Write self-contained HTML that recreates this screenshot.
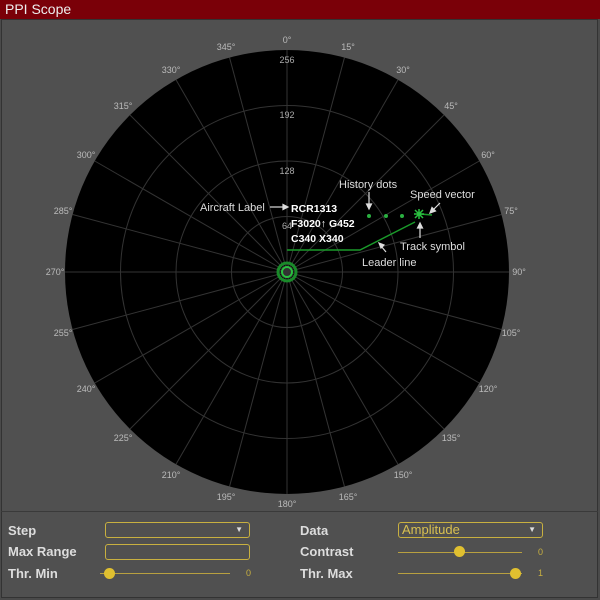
<!DOCTYPE html><html><head><style>
body{margin:0;width:600px;height:600px;background:#4a4a4a;font-family:"Liberation Sans",sans-serif;overflow:hidden;position:relative}
.title{position:absolute;left:0;top:0;width:600px;height:19px;background:#7a0008;color:#eee;font-size:14px;line-height:19px;padding-left:5px;box-sizing:border-box}
.frame{position:absolute;left:1px;top:19px;width:597px;height:579px;border:1px solid #333;background:#505050;box-sizing:border-box}
.lbl{position:absolute;color:#ddd;font-weight:bold;font-size:13px}
.box{position:absolute;height:16px;border:1px solid #c8b040;border-radius:3px;box-sizing:border-box;color:#d8c050;font-size:13px;line-height:14px;padding-left:3px}
.arr{position:absolute;right:6px;top:0;font-size:8px;color:#ddd}
.sl{position:absolute;height:1px;background:#b8a040}
.kn{position:absolute;width:11px;height:11px;border-radius:50%;background:#e0c030}
.v{position:absolute;color:#c8b040;font-size:9px}
</style></head><body>
<div class="title">PPI Scope</div>
<div class="frame"></div>
<svg width="600" height="600" style="position:absolute;left:0;top:0">
<g transform="translate(287,272)" font-family="Liberation Sans" >
<circle r="222" fill="#000"/>
<g stroke="#333" stroke-width="1" fill="none">
<circle r="55.5"/><circle r="111"/><circle r="166.5"/>
<g id="sp"><line x1="0" y1="0" x2="0" y2="-222"/></g>
<use href="#sp" transform="rotate(15)"/><use href="#sp" transform="rotate(30)"/><use href="#sp" transform="rotate(45)"/><use href="#sp" transform="rotate(60)"/><use href="#sp" transform="rotate(75)"/><use href="#sp" transform="rotate(90)"/><use href="#sp" transform="rotate(105)"/><use href="#sp" transform="rotate(120)"/><use href="#sp" transform="rotate(135)"/><use href="#sp" transform="rotate(150)"/><use href="#sp" transform="rotate(165)"/><use href="#sp" transform="rotate(180)"/><use href="#sp" transform="rotate(195)"/><use href="#sp" transform="rotate(210)"/><use href="#sp" transform="rotate(225)"/><use href="#sp" transform="rotate(240)"/><use href="#sp" transform="rotate(255)"/><use href="#sp" transform="rotate(270)"/><use href="#sp" transform="rotate(285)"/><use href="#sp" transform="rotate(300)"/><use href="#sp" transform="rotate(315)"/><use href="#sp" transform="rotate(330)"/><use href="#sp" transform="rotate(345)"/>
</g>
<g fill="#aaa" font-size="9" text-anchor="middle">
<text x="0" y="-209">256</text><text x="0" y="-154">192</text><text x="0" y="-98">128</text><text x="0" y="-43">64</text>
</g>
<g fill="#bbb" font-size="9" text-anchor="middle">
<text x="0" y="-229">0°</text>
<text x="61" y="-222">15°</text><text x="116" y="-199">30°</text><text x="164" y="-163">45°</text><text x="201" y="-114">60°</text><text x="224" y="-58">75°</text><text x="232" y="3">90°</text>
<text x="224" y="64">105°</text><text x="201" y="120">120°</text><text x="164" y="169">135°</text><text x="116" y="206">150°</text><text x="61" y="228">165°</text><text x="0" y="235">180°</text>
<text x="-61" y="228">195°</text><text x="-116" y="206">210°</text><text x="-164" y="169">225°</text><text x="-201" y="120">240°</text><text x="-224" y="64">255°</text><text x="-232" y="3">270°</text>
<text x="-224" y="-58">285°</text><text x="-201" y="-114">300°</text><text x="-164" y="-163">315°</text><text x="-116" y="-199">330°</text><text x="-61" y="-222">345°</text>
</g>
<circle r="9" fill="none" stroke="#1a8a2a" stroke-width="3"/><circle r="5" fill="none" stroke="#2ac040" stroke-width="2"/><circle r="2" fill="#333"/>
</g>
<g stroke="#1a9a2a" stroke-width="1.5" fill="none">
<polyline points="287,250 360,250 415,222"/>
<line x1="420" y1="214" x2="432" y2="215"/>
<path d="M414,214 L424,214 M419,209 L419,219 M415,210 L423,218 M423,210 L415,218" stroke="#2ac040"/>
</g>
<g fill="#2ab040"><circle cx="369" cy="216" r="2"/><circle cx="386" cy="216" r="2"/><circle cx="402" cy="216" r="2"/></g>
<g fill="#ddd" font-size="11">
<text x="200" y="211">Aircraft Label</text>
<text x="339" y="188">History dots</text>
<text x="410" y="198">Speed vector</text>
<text x="400" y="250">Track symbol</text>
<text x="362" y="266">Leader line</text>
</g>
<g stroke="#ddd" stroke-width="1.2" fill="#ddd">
<line x1="270" y1="207" x2="285" y2="207"/><path d="M288,207 l-5,-2.5 v5z"/>
<line x1="369" y1="192" x2="369" y2="206"/><path d="M369,209 l-2.5,-5 h5z"/>
<line x1="440" y1="203" x2="433" y2="210"/><path d="M430,213 l2,-5.5 l3.5,3.5z"/>
<line x1="420" y1="238" x2="420" y2="226"/><path d="M420,223 l-2.5,5 h5z"/>
<line x1="386" y1="252" x2="381" y2="246"/><path d="M379,243 l5,2 l-3,3z"/>
</g>
<g fill="#fff" font-size="10.5" font-weight="bold">
<text x="291" y="212">RCR1313</text><text x="291" y="227">F3020↑ G452</text><text x="291" y="242">C340 X340</text>
</g>
</svg>
<div style="position:absolute;left:1px;top:511px;width:597px;height:1px;background:#3a3a3a"></div>
<div class="lbl" style="left:8px;top:523px">Step</div>
<div class="lbl" style="left:8px;top:544px">Max Range</div>
<div class="lbl" style="left:8px;top:566px">Thr. Min</div>
<div class="lbl" style="left:300px;top:523px">Data</div>
<div class="lbl" style="left:300px;top:544px">Contrast</div>
<div class="lbl" style="left:300px;top:566px">Thr. Max</div>
<div class="box" style="left:105px;top:522px;width:145px"><span class="arr">▼</span></div>
<div class="box" style="left:105px;top:544px;width:145px"></div>
<div class="box" style="left:398px;top:522px;width:145px">Amplitude<span class="arr">▼</span></div>
<div class="sl" style="left:100px;top:573px;width:130px"></div><div class="kn" style="left:104px;top:568px"></div><div class="v" style="left:246px;top:568px">0</div>
<div class="sl" style="left:398px;top:552px;width:124px"></div><div class="kn" style="left:454px;top:546px"></div><div class="v" style="left:538px;top:547px">0</div>
<div class="sl" style="left:398px;top:573px;width:124px"></div><div class="kn" style="left:510px;top:568px"></div><div class="v" style="left:538px;top:568px">1</div>
</body></html>
